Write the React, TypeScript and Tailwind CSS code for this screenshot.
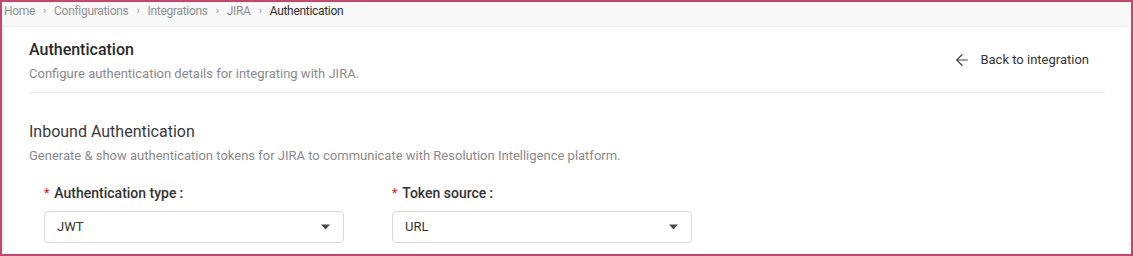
import { ArrowLeft } from "lucide-react";

const crumbs = ["Home", "Configurations", "Integrations", "JIRA"];

function SelectBox({ value }: { value: string }) {
  return (
    <div className="flex h-[32px] w-[300px] items-center justify-between rounded-[4px] border border-[#d9d9d9] bg-white pl-[12px] pr-[13px] text-[13px] text-[#333]">
      <span>{value}</span>
      <svg width="9" height="6" viewBox="0 0 9 6" className="text-[#4a4a4a]">
        <path d="M0 0.5h9L4.5 5.5z" fill="currentColor" />
      </svg>
    </div>
  );
}

function Field({ label, value }: { label: string; value: string }) {
  return (
    <div className="flex flex-col">
      <div className="flex h-[20px] items-center text-[14px] font-medium text-[#333]">
        <span className="mr-[5px] text-[12px] text-[#e0282e]">*</span>
        <span>{label}</span>
        <span className="ml-[3px]">:</span>
      </div>
      <div className="mt-[8px]">
        <SelectBox value={value} />
      </div>
    </div>
  );
}

export default function App() {
  return (
    <div
      className="h-[256px] w-[1133px] overflow-hidden border-2 border-[#c7456a] bg-[#f8f8f8]"
      style={{ fontFamily: "Roboto, 'Liberation Sans', sans-serif" }}
    >
      <nav className="flex h-[24px] items-center gap-[8px] pb-[6px] pl-[2px] text-[12px] tracking-[-0.3px] text-[#929292]">
        {crumbs.map((c) => (
          <span key={c} className="flex items-center gap-[8px]">
            <span>{c}</span>
            <span className="text-[11px] text-[#999]">›</span>
          </span>
        ))}
        <span className="text-[#2f2f2f]">Authentication</span>
      </nav>

      <section className="ml-[1px] mr-[2px] h-full border-l border-t border-[#ededed] bg-white pl-[25px] pr-[24px]">
        <header className="flex items-center justify-between border-b border-[#e6e8ee] pb-[8px] pt-[12px]">
          <div>
            <h1 className="text-[16px] font-medium leading-[22px] text-[#2b2b2b]">Authentication</h1>
            <p className="mt-[3px] text-[13px] leading-[20px] text-[#8a8a8a]">
              Configure authentication details for integrating with JIRA.
            </p>
          </div>
          <button
            type="button"
            className="mb-[4px] mr-[16px] flex items-center gap-[9px] text-[13px] text-[#333]"
          >
            <ArrowLeft size={18} strokeWidth={1.6} className="text-[#444]" />
            <span>Back to integration</span>
          </button>
        </header>

        <div className="pt-[28px]">
          <h2 className="text-[16px] leading-[22px] text-[#3a3a3a]">Inbound Authentication</h2>
          <p className="mt-[3px] text-[13px] leading-[20px] text-[#8a8a8a]">
            Generate &amp; show authentication tokens for JIRA to communicate with Resolution Intelligence platform.
          </p>

          <div className="mt-[17px] flex gap-[48px] pl-[15px]">
            <Field label="Authentication type" value="JWT" />
            <Field label="Token source" value="URL" />
          </div>
        </div>
      </section>
    </div>
  );
}
